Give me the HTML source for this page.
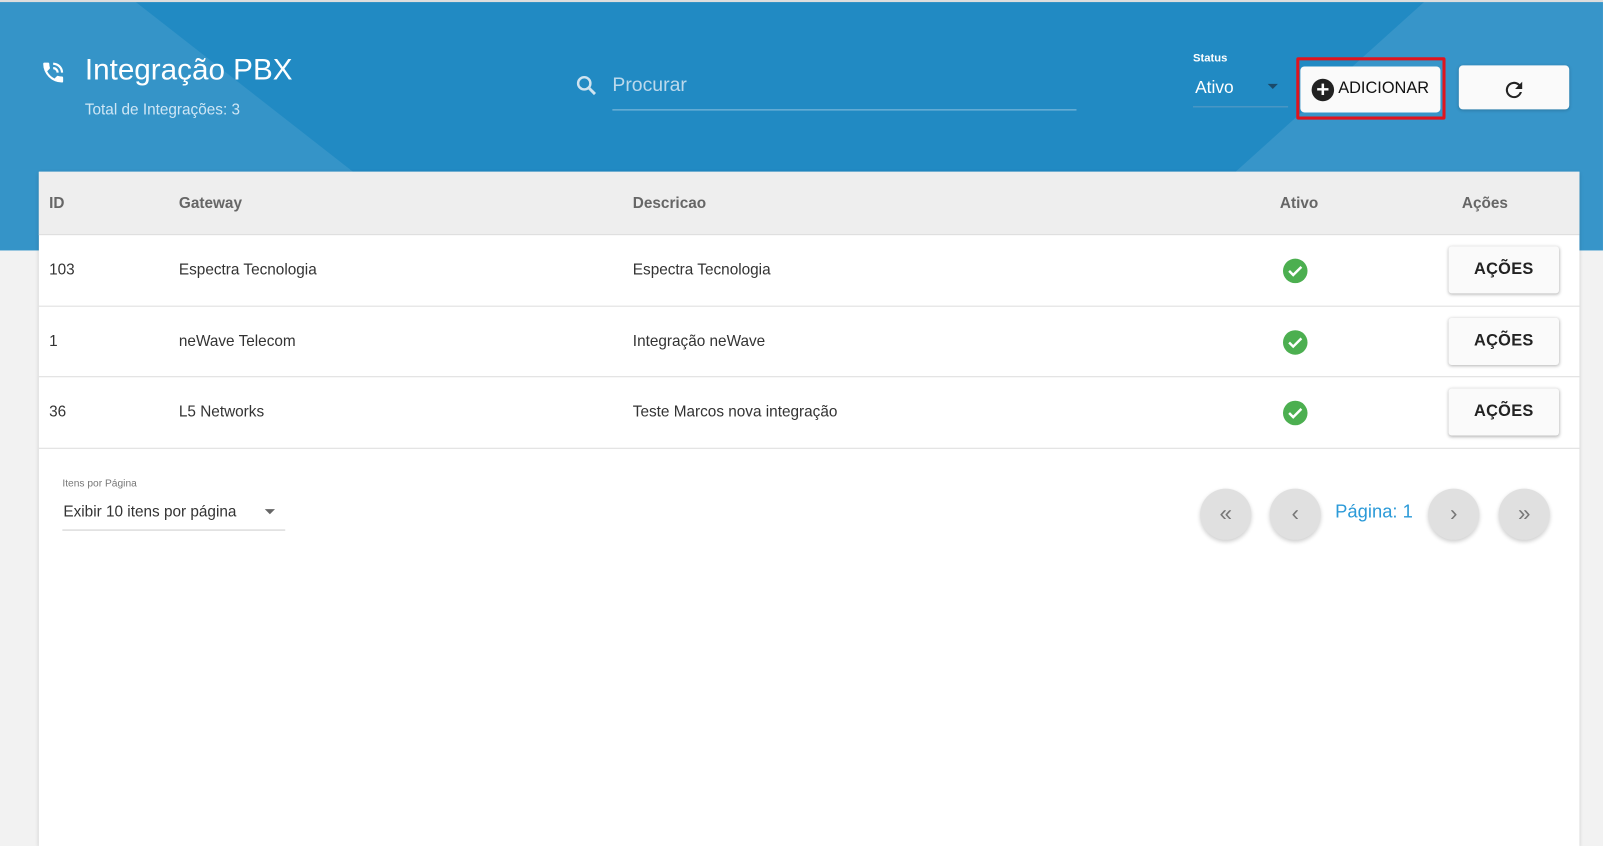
<!DOCTYPE html>
<html><head><meta charset="utf-8"><style>
*{box-sizing:border-box;margin:0;padding:0}
body{width:1603px;height:817px;overflow:hidden;font-family:"Liberation Sans",sans-serif;background:#f2f2f2;position:relative}
#w{position:absolute;left:0;top:0;width:1568px;height:800px;transform:scale(1.0223);transform-origin:0 0}
.hdr{position:absolute;left:0;top:2px;width:1568px;height:243px;background:#218ac3;overflow:hidden}
.top{position:absolute;left:0;top:0;width:1568px;height:2px;background:#ddd}
.d1{position:absolute;left:-200px;top:-400px;width:400px;height:1100px;background:rgba(255,255,255,.09);transform:rotate(-52deg);transform-origin:center}
.d2{position:absolute;left:1350px;top:-300px;width:500px;height:900px;background:rgba(255,255,255,.1);transform:rotate(48deg)}
.card{position:absolute;left:38px;top:168px;width:1507px;height:660px;background:#fff;box-shadow:0 1px 4px rgba(0,0,0,.2)}
.th{height:62px;background:#eee;border-bottom:1px solid #ddd;position:relative;font-weight:bold;color:#666;font-size:15px}
.th span,.tr span{position:absolute;top:50%;transform:translateY(-50%)}
.tr{height:69.5px;border-bottom:1px solid #ddd;position:relative;font-size:15px;color:#333}
.btn{position:absolute;left:1379px;top:11px;width:108px;height:46px;background:#fafafa;border-radius:3px;box-shadow:0 1px 3px rgba(0,0,0,.3);font-size:16px;color:#222;text-align:center;line-height:46px;letter-spacing:.3px;font-weight:bold}
.ok{position:absolute;left:1217px;top:23px;width:24px;height:24px;border-radius:50%;background:#4caf50}
.pg{position:absolute;top:310px;width:50px;height:50px;border-radius:50%;background:#e0e0e0;box-shadow:0 2px 4px rgba(0,0,0,.2);color:#777;font-size:22px;text-align:center;line-height:48px}
</style></head><body><div id="w">
<div class="hdr"><div class="d1"></div><div class="d2"></div></div>
<div class="top"></div>
<svg style="position:absolute;left:38px;top:58px" width="28" height="26" viewBox="0 0 24 24"><path fill="#fff" d="M20 15.5c-1.25 0-2.45-.2-3.57-.57a1 1 0 0 0-1.02.24l-2.2 2.2a15.07 15.07 0 0 1-6.59-6.59l2.2-2.2a1 1 0 0 0 .25-1.01A11.4 11.4 0 0 1 8.5 4a1 1 0 0 0-1-1H4a1 1 0 0 0-1 1 17 17 0 0 0 17 17 1 1 0 0 0 1-1v-3.5a1 1 0 0 0-1-1zM19 12h2a9 9 0 0 0-9-9v2a7 7 0 0 1 7 7zm-4 0h2a5 5 0 0 0-5-5v2a3 3 0 0 1 3 3z"/></svg>
<div style="position:absolute;left:83px;top:53px;color:#fff;font-size:29px">Integração PBX</div>
<div style="position:absolute;left:83px;top:99px;color:#cfe6f5;font-size:15px">Total de Integrações: 3</div>
<svg style="position:absolute;left:562px;top:72px" width="24" height="24" viewBox="0 0 24 24"><circle cx="9.5" cy="9.5" r="6" fill="none" stroke="#cfe3f0" stroke-width="2.4"/><path d="M14 14l6 6" stroke="#cfe3f0" stroke-width="2.8"/></svg>
<div style="position:absolute;left:599px;top:73px;color:#bcd9ec;font-size:19px">Procurar</div>
<div style="position:absolute;left:599px;top:107px;width:454px;height:1px;background:#8cc0e0"></div>
<div style="position:absolute;left:1167px;top:51px;color:#fff;font-size:11px;font-weight:bold">Status</div>
<div style="position:absolute;left:1169px;top:76px;color:#fff;font-size:17px">Ativo</div>
<div style="position:absolute;left:1240px;top:82px;border:5px solid transparent;border-top-color:#1a4a6a"></div>
<div style="position:absolute;left:1167px;top:104px;width:93px;height:1px;background:#5a9cc5"></div>
<div style="position:absolute;left:1268px;top:56px;width:146px;height:61px;border:3px solid #e0141e;border-radius:2px"></div>
<div style="position:absolute;left:1272px;top:65px;width:137px;height:45px;background:#fafafa;border-radius:4px;font-size:16px;color:#111;line-height:44px;padding-left:37px">ADICIONAR</div>
<div style="position:absolute;left:1283px;top:77px;width:22px;height:22px;border-radius:50%;background:#222;color:#fff;font-weight:bold;font-size:22px;line-height:21px;text-align:center">+</div>
<div style="position:absolute;left:1427px;top:64px;width:108px;height:43px;background:#fafafa;border-radius:4px;box-shadow:0 1px 3px rgba(0,0,0,.2)"></div>
<svg style="position:absolute;left:1469px;top:76px" width="24" height="24" viewBox="0 0 24 24"><path d="M17.65 6.35A8 8 0 1 0 19.73 14h-2.08A6 6 0 1 1 12 6c1.66 0 3.14.69 4.22 1.78L13 11h7V4l-2.35 2.35z" fill="#222"/></svg>
<div class="card">
<div class="th"><span style="left:10px">ID</span><span style="left:137px">Gateway</span><span style="left:581px">Descricao</span><span style="left:1214px">Ativo</span><span style="left:1392px">Ações</span></div>
<div class="tr"><span style="left:10px">103</span><span style="left:137px">Espectra Tecnologia</span><span style="left:581px">Espectra Tecnologia</span><div class="ok"></div><svg style="position:absolute;left:1222px;top:29px" width="14" height="12"><path d="M1 6l4 4 8-8" stroke="#fff" stroke-width="2.4" fill="none"/></svg><div class="btn">AÇÕES</div></div>
<div class="tr"><span style="left:10px">1</span><span style="left:137px">neWave Telecom</span><span style="left:581px">Integração neWave</span><div class="ok"></div><svg style="position:absolute;left:1222px;top:29px" width="14" height="12"><path d="M1 6l4 4 8-8" stroke="#fff" stroke-width="2.4" fill="none"/></svg><div class="btn">AÇÕES</div></div>
<div class="tr"><span style="left:10px">36</span><span style="left:137px">L5 Networks</span><span style="left:581px">Teste Marcos nova integração</span><div class="ok"></div><svg style="position:absolute;left:1222px;top:29px" width="14" height="12"><path d="M1 6l4 4 8-8" stroke="#fff" stroke-width="2.4" fill="none"/></svg><div class="btn">AÇÕES</div></div>
<div style="position:absolute;left:23px;top:300px;font-size:10px;color:#777">Itens por Página</div>
<div style="position:absolute;left:24px;top:324px;font-size:15px;color:#333">Exibir 10 itens por página</div>
<div style="position:absolute;left:221px;top:330px;border:5px solid transparent;border-top-color:#666"></div>
<div style="position:absolute;left:23px;top:350px;width:218px;height:1px;background:#ccc"></div>
<div class="pg" style="left:1136px">«</div>
<div class="pg" style="left:1204px">‹</div>
<div style="position:absolute;left:1268px;top:322px;font-size:18px;color:#2b9ad8">Página: 1</div>
<div class="pg" style="left:1359px">›</div>
<div class="pg" style="left:1428px">»</div>
</div>
</div></body></html>
